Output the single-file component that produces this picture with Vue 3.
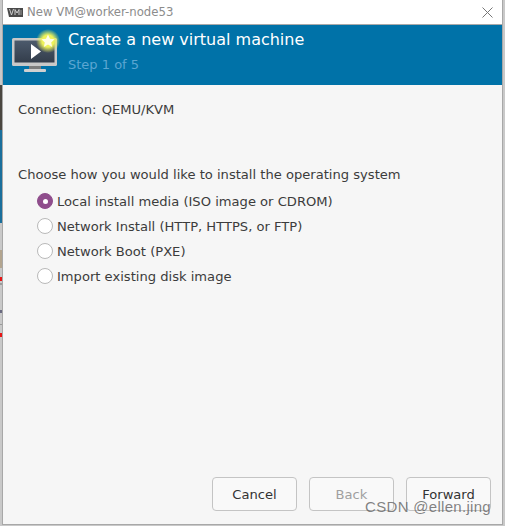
<script setup>
const options = [
  { label: 'Local install media (ISO image or CDROM)', checked: true },
  { label: 'Network Install (HTTP, HTTPS, or FTP)', checked: false },
  { label: 'Network Boot (PXE)', checked: false },
  { label: 'Import existing disk image', checked: false },
]
</script>

<template>
  <div class="screen">
    <div class="window">
      <div class="titlebar">
        <svg class="appicon" width="16" height="9" viewBox="0 0 16 9">
          <path d="M0 0h16v9H2z" fill="#4a4a4a" />
          <path d="M2.5 1l2 6L6.5 1M8 7V1.5L10 5l2-3.5V7" stroke="#cfcfcf" stroke-width="1" fill="none" />
          <path d="M14 2v5" stroke="#9a9a9a" stroke-width="1" />
        </svg>
        <span class="title">New VM@worker-node53</span>
        <svg class="close" width="11" height="11" viewBox="0 0 11 11">
          <path d="M.5.5l10 10M10.5.5l-10 10" stroke="#777" stroke-width="1" fill="none" />
        </svg>
      </div>
      <header class="banner">
        <svg class="monitor" width="46" height="42" viewBox="0 0 46 42">
          <defs>
            <radialGradient id="glow">
              <stop offset="0.5" stop-color="#eef25a" />
              <stop offset="1" stop-color="#eef25a" stop-opacity="0" />
            </radialGradient>
            <linearGradient id="scr" x1="0" y1="0" x2="0" y2="1">
              <stop offset="0" stop-color="#4c5a6c" />
              <stop offset="1" stop-color="#333d4b" />
            </linearGradient>
          </defs>
          <rect x="1" y="8" width="45" height="28" rx="1.5" fill="#c8c8c8" />
          <rect x="3.5" y="10.5" width="40" height="22" fill="url(#scr)" />
          <path d="M20 14l10 7.5-10 7.5z" fill="#fff" />
          <rect x="18" y="36" width="12" height="3" fill="#7d7d7d" />
          <rect x="13" y="39" width="22" height="3" rx="1" fill="#d0d0d0" />
          <circle cx="37" cy="11" r="12" fill="url(#glow)" />
          <path d="M37 4.5l2 4.2 4.6.6-3.4 3.1 1 4.6-4.2-2.4-4.2 2.4 1-4.6-3.4-3.1 4.6-.6z" fill="#fffde6" />
        </svg>
        <div class="heading">
          <div class="heading-title">Create a new virtual machine</div>
          <div class="heading-step">Step 1 of 5</div>
        </div>
      </header>
      <main class="content">
        <div class="connection">Connection: QEMU/KVM</div>
        <div class="prompt">Choose how you would like to install the operating system</div>
        <div class="options">
          <label v-for="o in options" :key="o.label" class="option">
            <span class="radio" :class="{ on: o.checked }"></span>
            <span>{{ o.label }}</span>
          </label>
        </div>
      </main>
      <footer class="actions">
        <button class="btn">Cancel</button>
        <button class="btn" disabled>Back</button>
        <button class="btn">Forward</button>
      </footer>
    </div>
    <span class="strip s1"></span>
    <span class="strip s1b"></span>
    <span class="strip s4"></span>
    <span class="strip s2"></span>
    <span class="strip s6"></span>
    <span class="strip s5"></span>
    <span class="strip s7"></span>
    <span class="strip s3"></span>
    <span class="watermark">CSDN @ellen.jing</span>
  </div>
</template>

<style>
html, body { margin: 0; background: #fff; }
</style>

<style scoped>
.screen {
  position: relative;
  width: 505px;
  height: 526px;
  overflow: hidden;
  background: #c9c9c9;
  font-family: "DejaVu Sans", sans-serif;
}
.window {
  width: 499px;
  height: 524px;
  margin-left: 3px;
  box-sizing: border-box;
  display: flex;
  flex-direction: column;
  background: #f6f6f6;
  box-shadow: 0 0 0 1px #a8a8a8;
}
.titlebar {
  height: 24px;
  flex: none;
  display: flex;
  align-items: center;
  padding: 0 9px 0 4px;
  background: #fff;
  border-bottom: 1px solid #a9a9a9;
}
.appicon { flex: none; margin-right: 4px; }
.title { flex: 1; font-size: 11.7px; color: #8c8c8c; }
.close { flex: none; }
.banner {
  height: 60px;
  flex: none;
  display: flex;
  align-items: flex-start;
  gap: 11px;
  padding-left: 8px;
  background: #0072a8;
}
.monitor { flex: none; margin-top: 5px; overflow: visible; }
.heading { padding-top: 5px; }
.heading-title { color: #fff; font-size: 16px; line-height: 20px; }
.heading-step { color: #5ba6d2; font-size: 13px; line-height: 16px; margin-top: 7px; }
.content {
  flex: 1;
  padding: 17px 15px 0;
  color: #3c3c3c;
  font-size: 13.1px;
}
.connection { line-height: 16px; word-spacing: 1px; }
.prompt { line-height: 16px; margin-top: 49px; }
.options {
  display: flex;
  flex-direction: column;
  gap: 9px;
  margin-top: 10px;
  padding-left: 19px;
}
.option { display: flex; align-items: center; gap: 4px; height: 16px; }
.radio {
  width: 16px;
  height: 16px;
  box-sizing: border-box;
  flex: none;
  border-radius: 50%;
  border: 1px solid #b9b9b9;
  background: #fff;
  position: relative;
}
.radio.on { background: #8f4d8c; border-color: #8f4d8c; }
.radio.on::after {
  content: "";
  position: absolute;
  left: 4.5px;
  top: 4.5px;
  width: 5px;
  height: 5px;
  border-radius: 50%;
  background: #fff;
}
.actions {
  flex: none;
  display: flex;
  justify-content: flex-end;
  gap: 12px;
  padding: 0 11px 13px;
}
.btn {
  width: 85px;
  height: 34px;
  padding: 0;
  border: 1px solid #c4c4c4;
  border-radius: 4px;
  background: #f9f9f9;
  color: #333;
  font: 13.1px "DejaVu Sans", sans-serif;
}
.btn:disabled { color: #a0a0a0; }
.strip { position: absolute; left: 0; width: 2px; }
.s1 { top: 85px; height: 45px; background: #4a4640; }
.s1b { top: 130px; height: 93px; background: #1a6f9c; }
.s4 { top: 250px; height: 18px; background: #b3a58f; }
.s2 { top: 277px; height: 4px; background: #e81515; }
.s6 { top: 283px; height: 2px; background: #9a9a9a; }
.s5 { top: 310px; height: 3px; background: #6a6a80; }
.s7 { top: 324px; height: 1px; background: #9a9a9a; }
.s3 { top: 333px; height: 4px; background: #e81515; }
.watermark {
  position: absolute;
  right: 14px;
  top: 498px;
  font: 15px "Liberation Sans", sans-serif;
  color: rgba(90, 90, 90, 0.75);
  letter-spacing: 0.3px;
}
</style>
